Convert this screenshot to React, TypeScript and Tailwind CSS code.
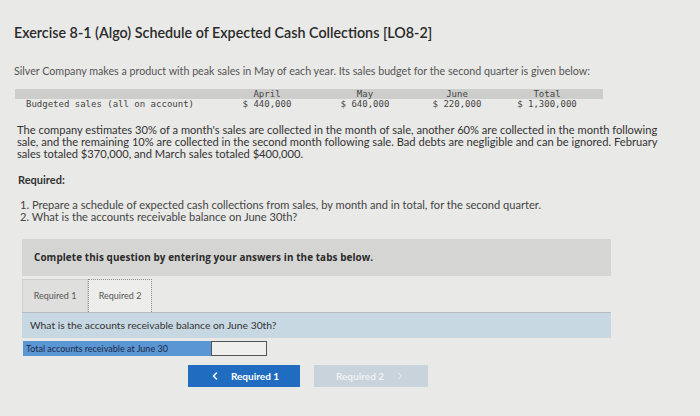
import { ChevronLeft, ChevronRight } from 'lucide-react'

const sans = "font-['Lato','Open_Sans',sans-serif]"
const mono = "font-['DejaVu_Sans_Mono','Liberation_Mono',monospace]"

const months = [
  { label: 'April', value: '$ 440,000' },
  { label: 'May', value: '$ 640,000' },
  { label: 'June', value: '$ 220,000' },
  { label: 'Total', value: '$ 1,300,000' },
]

export default function App() {
  return (
    <div className={`w-[700px] h-[416px] overflow-hidden bg-[#e9e9e7] text-[#333] ${sans}`}>
      {/* Title */}
      <h1 className="pt-[23px] pl-[14px] text-[14.3px] leading-[20px] font-semibold text-[#2a2a2a]">
        Exercise 8-1 (Algo) Schedule of Expected Cash Collections [LO8-2]
      </h1>

      <p className="mt-[21px] pl-[14px] text-[10.7px] leading-[14px] text-[#555]">
        Silver Company makes a product with peak sales in May of each year. Its sales budget for the second quarter is given below:
      </p>

      {/* Sales budget table */}
      <div className={`mt-[11px] ml-[15px] w-[588px] text-[9px] leading-[10px] text-[#444] ${mono}`}>
        <div className="grid grid-cols-[203px_98px_98px_86px_94px] bg-[#cdcdcc]">
          <div />
          {months.map(m => (
            <div key={m.label} className="text-center">{m.label}</div>
          ))}
        </div>
        <div className="grid grid-cols-[203px_98px_98px_86px_94px]">
          <div className="pl-[11px]">Budgeted sales (all on account)</div>
          {months.map(m => (
            <div key={m.label} className="text-center">{m.value}</div>
          ))}
        </div>
      </div>

      <p className="mt-[15px] pl-[17px] text-[11.15px] leading-[12px] text-[#333] whitespace-nowrap">
        The company estimates 30% of a month's sales are collected in the month of sale, another 60% are collected in the month following
        <br />
        sale, and the remaining 10% are collected in the second month following sale. Bad debts are negligible and can be ignored. February
        <br />
        sales totaled $370,000, and March sales totaled $400,000.
      </p>

      <p className="mt-[14px] pl-[18px] text-[11px] leading-[12px] font-bold text-[#333]">Required:</p>

      <ol className="mt-[13px] pl-[20px] text-[11.1px] leading-[12px] text-[#444]">
        <li>1. Prepare a schedule of expected cash collections from sales, by month and in total, for the second quarter.</li>
        <li>2. What is the accounts receivable balance on June 30th?</li>
      </ol>

      {/* Instructions box */}
      <div className="mt-[16px] ml-[22px] w-[589px] h-[37px] bg-[#d5d5d3] flex items-center pl-[12px]">
        <span className="font-['Open_Sans',sans-serif] text-[9.9px] font-bold text-[#2a2a2a] tracking-[0.1px]">
          Complete this question by entering your answers in the tabs below.
        </span>
      </div>

      {/* Tabs */}
      <div className="mt-[3px] ml-[22px] w-[589px] h-[34px] flex items-end border-b border-[#b8bcc0]">
        <div className="w-[66px] h-[33px] flex items-center justify-center bg-[#dfdfdd] border border-[#cfcfcd] border-b-0 text-[9px] text-[#555]">
          Required 1
        </div>
        <div className="w-[64px] h-[33px] flex items-center justify-center bg-[#ededeb] border border-dotted border-[#8a8a8a] border-b-0 text-[9px] text-[#555]">
          Required 2
        </div>
      </div>

      {/* Question bar */}
      <div className="ml-[22px] w-[589px] h-[25px] bg-[#c8d8e2] flex items-center pl-[8px] text-[10.3px] text-[#333]">
        What is the accounts receivable balance on June 30th?
      </div>

      {/* Answer row */}
      <div className="mt-[3px] ml-[23px] flex h-[15px]">
        <div className="w-[188px] bg-[#5b96d4] pl-[3px] flex items-center text-[9px] text-[#1d2b45]">
          Total accounts receivable at June 30
        </div>
        <div className="w-[56px] bg-[#efefed] border border-[#555]" />
      </div>

      {/* Nav buttons */}
      <div className="mt-[9px] ml-[188px] flex gap-[14px]">
        <div className="w-[112px] h-[22px] bg-[#1f6cc0] flex items-center justify-center gap-[10px] text-white text-[10px] font-bold">
          <ChevronLeft className="w-3 h-3" strokeWidth={3} />
          <span>Required 1</span>
        </div>
        <div className="w-[114px] h-[22px] bg-[#c9d3dc] flex items-center justify-center gap-[10px] text-[#eef2f5] text-[10px] font-bold">
          <span>Required 2</span>
          <ChevronRight className="w-3 h-3" strokeWidth={2} />
        </div>
      </div>
    </div>
  )
}
